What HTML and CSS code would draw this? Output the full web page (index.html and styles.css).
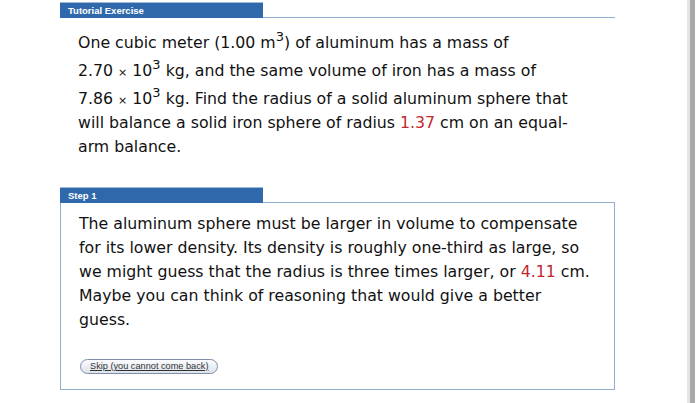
FILE: index.html
```html
<!DOCTYPE html>
<html>
<head>
<meta charset="utf-8">
<link rel="stylesheet" href="styles.css">
</head>
<body>
<div class="page">
  <section class="exercise">
    <div class="head">
      <div class="tab">Tutorial Exercise</div>
      <div class="rule"></div>
    </div>
    <p class="text">One cubic meter (1.00 m<sup>3</sup>) of aluminum has a mass of <span class="nw">2.70 <span class="times">×</span> 10<sup>3</sup></span> kg, and the same volume of iron has a mass of <span class="nw">7.86 <span class="times">×</span> 10<sup>3</sup></span> kg. Find the radius of a solid aluminum sphere that will balance a solid iron sphere of radius <span class="red">1.37</span> cm on an equal-arm balance.</p>
  </section>
  <section class="step">
    <div class="head">
      <div class="tab">Step 1</div>
      <div class="rule"></div>
    </div>
    <div class="box">
      <p class="text">The aluminum sphere must be larger in volume to compensate for its lower density. Its density is roughly one-third as large, so we might guess that the radius is three times larger, or <span class="red">4.11</span> cm. Maybe you can think of reasoning that would give a better guess.</p>
      <div class="actions"><button class="skip">Skip (you cannot come back)</button></div>
    </div>
  </section>
</div>
<div class="scrollbar"></div>
</body>
</html>
```
FILE: styles.css
```css
html, body {
  margin: 0;
  padding: 0;
  background: #fff;
}
body {
  font-family: "DejaVu Sans", Verdana, sans-serif;
  color: #111;
}
.page {
  width: 555px;
  margin-left: 60px;
  padding-top: 2px;
}
.head {
  display: flex;
  align-items: flex-end;
}
.tab {
  width: 195px;
  height: 15px;
  line-height: 15px;
  padding-left: 8px;
  background: #2f69ac;
  color: #fff;
  font-family: "Liberation Sans", Arial, sans-serif;
  font-weight: bold;
  font-size: 9.5px;
  border-top: 1px solid #9bb8d8;
}
.rule {
  flex: 1;
  border-bottom: 1px solid #8fb0d0;
}
.text {
  margin: 0;
  width: 516px;
  font-size: 15.75px;
  line-height: 24px;
  padding-left: 18px;
}
.exercise .text {
  padding-top: 9px;
}
.nw {
  white-space: nowrap;
}
sup {
  font-size: 13px;
  line-height: 20px;
  vertical-align: 7px;
}
.times {
  font-size: 11px;
  line-height: 1;
}
.red {
  color: #c2282e;
}
.step {
  margin-top: 28px;
}
.box {
  border: 1px solid #8fb0d0;
  border-top: none;
  padding-top: 9px;
  height: 177px;
}
.actions {
  padding-left: 19px;
  padding-top: 22px;
}
.skip {
  height: 15px;
  padding: 0 9px;
  border: 1px solid #7f8ea9;
  border-radius: 8px;
  background: linear-gradient(#fbfcfe, #dde3ec);
  font-family: "Liberation Sans", Arial, sans-serif;
  font-size: 9.2px;
  color: #333;
  text-decoration: underline;
  line-height: 13px;
}
.scrollbar {
  position: fixed;
  top: 0;
  bottom: 0;
  right: 5px;
  width: 8px;
  background: linear-gradient(to right, #e4e4e4 0 3px, #a9a9a9 3px);
}
```
